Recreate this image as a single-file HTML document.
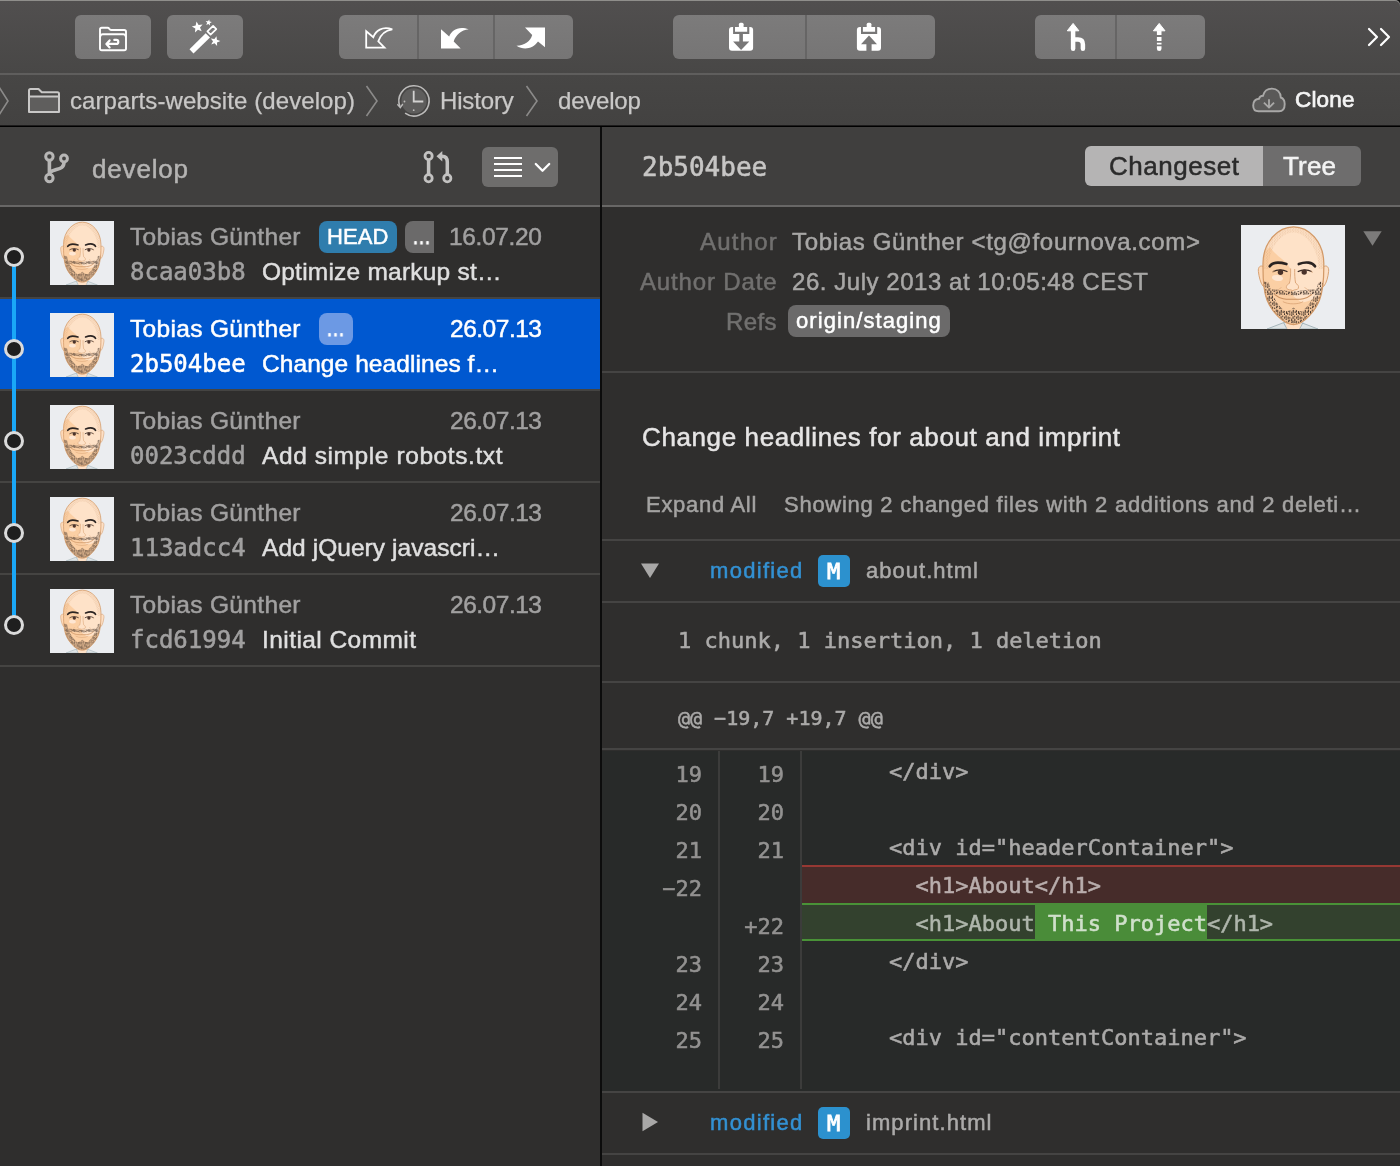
<!DOCTYPE html>
<html lang="en">
<head>
<meta charset="utf-8">
<title>Tower – carparts-website</title>
<style>
*{box-sizing:border-box;margin:0;padding:0}
html,body{width:1400px;height:1166px;overflow:hidden;background:#2f2e2d}
body{position:relative;font-family:"Liberation Sans",sans-serif;color:#ddd;-webkit-font-smoothing:antialiased}
.a{position:absolute}
.t{will-change:transform;position:absolute;white-space:nowrap;line-height:0;-webkit-text-stroke:0.5px currentColor;left:calc(var(--x)*1px);top:calc(var(--b)*1px - var(--fs)*0.3465px);font-size:calc(var(--fs)*1px);letter-spacing:calc(var(--ls,0)*1px)}
.m{font-family:"DejaVu Sans Mono","Liberation Mono",monospace;-webkit-text-stroke:0.55px currentColor}
.r{transform:translateX(-100%)}
svg{position:absolute;overflow:visible}
/* top chrome */
#toolbar{left:0;top:0;width:1400px;height:74px;background:linear-gradient(#514f4f,#484746);border-top-right-radius:5px;box-shadow:inset 0 1px 0 #8f8e8b}
#topline{left:0;top:0;width:1400px;height:1px;background:#8d8c8c}
#tbsep{left:0;top:73px;width:1400px;height:2px;background:#5f5e5d}
#crumbs{left:0;top:75px;width:1400px;height:50px;background:linear-gradient(#474645,#434241)}
#crumbline{left:0;top:125px;width:1400px;height:2px;background:linear-gradient(#1d1c1c 50%,#000 50%)}
.btn{position:absolute;top:15px;height:44px;background:linear-gradient(#7c7b7b,#767575);border-radius:6px}
.bsep{position:absolute;top:15px;width:2px;height:44px;background:#666565}
/* panes */
#lhead{left:0;top:127px;width:600px;height:78px;background:#403f3e}
#rhead{left:602px;top:127px;width:798px;height:78px;background:#403f3e}
.hsep{position:absolute;height:2px;background:#454443}
#vdiv{left:600px;top:127px;width:2px;height:1039px;background:#0c0c0c}
.row{position:absolute;left:0;width:600px;height:92px}
.row.sel{background:#0058d0}
.av{position:absolute;left:50px;width:64px;height:64px}
.dot{position:absolute;left:4px;width:20px;height:20px;border-radius:50%;background:#1f1f1f;border:3px solid #dbdbdb}
.badge{position:absolute;border-radius:8px}
#code{left:602px;top:751px;width:798px;height:340px;background:#282a29}
</style>
</head>
<body>
<svg width="0" height="0" style="position:absolute">
<defs>
<pattern id="stub" width="12" height="14" patternUnits="userSpaceOnUse">
<rect x="0.3" y="0.7" width="0.9" height="3.0" rx="0.3" fill="#46362c"/>
<rect x="0.4" y="4.2" width="0.9" height="2.2" rx="0.3" fill="#46362c"/>
<rect x="0.4" y="8.0" width="0.9" height="1.8" rx="0.3" fill="#46362c"/>
<rect x="0.2" y="10.6" width="0.9" height="1.8" rx="0.3" fill="#46362c"/>
<rect x="2.4" y="2.5" width="0.9" height="2.2" rx="0.3" fill="#2a211e"/>
<rect x="2.3" y="5.3" width="0.9" height="1.8" rx="0.3" fill="#33271f"/>
<rect x="2.3" y="9.5" width="0.9" height="3.0" rx="0.3" fill="#2a211e"/>
<rect x="2.0" y="13.3" width="0.9" height="2.2" rx="0.3" fill="#2a211e"/>
<rect x="3.8" y="0.8" width="0.9" height="3.0" rx="0.3" fill="#2a211e"/>
<rect x="3.7" y="4.2" width="0.9" height="1.8" rx="0.3" fill="#2a211e"/>
<rect x="3.6" y="7.3" width="0.9" height="2.6" rx="0.3" fill="#2a211e"/>
<rect x="3.5" y="11.4" width="0.9" height="3.0" rx="0.3" fill="#2a211e"/>
<rect x="5.7" y="2.2" width="0.9" height="1.8" rx="0.3" fill="#2a211e"/>
<rect x="5.3" y="6.4" width="0.9" height="1.8" rx="0.3" fill="#46362c"/>
<rect x="5.4" y="9.6" width="0.9" height="3.0" rx="0.3" fill="#2a211e"/>
<rect x="5.5" y="12.5" width="0.9" height="2.6" rx="0.3" fill="#2a211e"/>
<rect x="6.9" y="0.4" width="0.9" height="3.0" rx="0.3" fill="#2a211e"/>
<rect x="7.0" y="4.3" width="0.9" height="1.8" rx="0.3" fill="#2a211e"/>
<rect x="7.2" y="7.6" width="0.9" height="2.2" rx="0.3" fill="#46362c"/>
<rect x="7.2" y="11.7" width="0.9" height="2.2" rx="0.3" fill="#46362c"/>
<rect x="9.0" y="1.9" width="0.9" height="3.0" rx="0.3" fill="#33271f"/>
<rect x="8.6" y="6.3" width="0.9" height="2.6" rx="0.3" fill="#2a211e"/>
<rect x="8.7" y="9.2" width="0.9" height="1.8" rx="0.3" fill="#2a211e"/>
<rect x="9.3" y="12.5" width="0.9" height="2.6" rx="0.3" fill="#2a211e"/>
<rect x="10.8" y="0.4" width="0.9" height="2.6" rx="0.3" fill="#46362c"/>
<rect x="10.3" y="3.6" width="0.9" height="2.2" rx="0.3" fill="#2a211e"/>
<rect x="10.7" y="7.4" width="0.9" height="3.0" rx="0.3" fill="#33271f"/>
<rect x="11.0" y="11.1" width="0.9" height="2.2" rx="0.3" fill="#46362c"/>
</pattern>
<pattern id="stub2" width="2.6" height="2.8" patternUnits="userSpaceOnUse">
<rect x="0.3" y="0.2" width="0.8" height="1.2" rx="0.4" fill="#c58f62"/>
<rect x="1.6" y="1.5" width="0.7" height="1.1" rx="0.3" fill="#d09a6c"/>
</pattern>
<clipPath id="headclip"><path d="M52.5 1.8C68 1.8 82.5 17 82.8 38C83 52 82 66 78.5 75C75 84 64 99.5 52.5 99.5C41 99.5 29.5 84 26 75C22.5 66 21.8 52 22 38C22.3 17 37 1.8 52.5 1.8Z"/></clipPath>
<symbol id="face" viewBox="0 0 104 104">
<rect width="104" height="104" fill="#ebedf0"/>
<!-- shirt / neck -->
<path d="M26 104L43 97.5L60 97.5L77 104Z" fill="#dfe4e6" stroke="#9fb0b6" stroke-width="0.9"/>
<path d="M45.5 104L44 94H61L59.5 104Z" fill="#fde0c6"/>
<path d="M42.5 97.6L46 104M62 97.6L58.6 104" stroke="#9fb0b6" stroke-width="0.9" fill="none"/>
<!-- ears -->
<path d="M23 42C19.5 39.5 16.8 42 17.4 46.5C18 52 19.5 58 22 61C23 62 24.5 61 24.5 59Z" fill="#fdd9b8" stroke="#d9a273" stroke-width="1"/>
<path d="M82 42C85.500 39.5 88.2 42 87.600 46.5C87 52 85.500 58 83 61C82 62 80.500 61 80.500 59Z" fill="#fde0c6" stroke="#d9a273" stroke-width="1"/>
<!-- head -->
<path d="M52.5 1.8C68 1.8 82.5 17 82.8 38C83 52 82 66 78.5 75C75 84 64 99.500 52.5 99.500C41 99.500 29.500 84 26 75C22.5 66 21.800 52 22 38C22.300 17 37 1.800 52.5 1.800Z" fill="#fee2c8"/>
<g clip-path="url(#headclip)">
<!-- shaded left side -->
<path d="M20 30L29 22C34 30 40 32 47 40L49.500 44L48.500 58L45 61C45 64 48 65.5 51.700 65.600L52 71L60 77C66 78 72 74 79 70L79 76L60 100H30L18 70Z" fill="#fbcfa4"/>
<!-- head stubble -->
<path d="M52.5 1.8C68 1.8 82.5 17 82.8 38L82.800 44L77.500 44C78 26 66 7.500 52.5 7.500C39 7.500 27 26 27.500 44L22 44L22 38C22.300 17 37 1.800 52.5 1.800Z" fill="url(#stub2)" opacity="0.75"/>
<!-- beard -->
<path id="beardunder" d="M20 56L27.500 57L29.500 64L32.500 72L37.500 80L44 86.500L49 85.500L52.500 82.500L56 85.500L61 86.500L67.500 80L72.500 72L75.500 64L77.500 57L85 56L84 75L66 102H38L21 75Z M29.500 64.500C37 64 44 65.500 52.300 66.800C60 65.500 67 64 75.500 64.500L74 69.600C67 68.600 60 70.200 52.300 70.800C45 70.200 38 68.600 31 69.600Z" fill="#b0825a" fill-opacity="0.14"/>
<path d="M20 56L27.500 57L29.500 64L32.500 72L37.500 80L44 86.500L49 85.500L52.500 82.500L56 85.500L61 86.500L67.500 80L72.500 72L75.500 64L77.500 57L85 56L84 75L66 102H38L21 75Z M29.500 64.500C37 64 44 65.500 52.300 66.800C60 65.500 67 64 75.500 64.500L74 69.600C67 68.600 60 70.200 52.300 70.800C45 70.200 38 68.600 31 69.600Z" fill="url(#stub)"/>
</g>
<!-- head outline -->
<path d="M52.5 1.8C68 1.8 82.5 17 82.8 38C83 52 82 66 78.5 75C75 84 64 99.500 52.5 99.500C41 99.500 29.500 84 26 75C22.5 66 21.800 52 22 38C22.300 17 37 1.800 52.5 1.800Z" fill="none" stroke="#d39a68" stroke-width="1.25"/>
<!-- cheek highlight -->
<ellipse cx="36.500" cy="53" rx="5.600" ry="3" fill="#fee6d2" transform="rotate(8 36.500 53)"/>
<!-- brows -->
<path d="M28.800 41.300C31 37.800 37 36.600 45.400 39" fill="none" stroke="#2b2422" stroke-width="2.7" stroke-linecap="round"/>
<path d="M57.800 39C65 36.400 71.500 37.300 74 41.300" fill="none" stroke="#2b2422" stroke-width="2.7" stroke-linecap="round"/>
<!-- eyes -->
<path d="M32.300 46.500C36 44.300 42 44.200 46 46.500" fill="none" stroke="#3a2b26" stroke-width="1.300" stroke-linecap="round"/>
<path d="M57.200 46.500C61 44.200 67 44.300 70.500 46.500" fill="none" stroke="#3a2b26" stroke-width="1.300" stroke-linecap="round"/>
<circle cx="39.500" cy="47.300" r="2.700" fill="#4a332b"/>
<circle cx="63.200" cy="47.100" r="2.700" fill="#4a332b"/>
<path d="M31 47.500L33.500 46M71.800 47.500L69.500 46" stroke="#d9a273" stroke-width="0.700"/>
<!-- nose -->
<path d="M49.600 43.500C49.800 50 49.300 55 48.300 58.500C46 59.500 44.600 61.500 45.800 63.500C47 65.300 49.500 64.300 51.700 65.600C54 64.300 56.500 65.300 57.300 63.300C58.300 61 56.500 59.500 54.600 58C53.800 54 53.600 49 53.700 44" fill="#fee2c8" stroke="#d9a273" stroke-width="0.900" stroke-linejoin="round"/>
<!-- smile lines -->
<path d="M40.500 62.500C37.500 64 35.500 66 34.500 68M63.500 62.500C66.500 64 68.500 66 69.500 68" fill="none" stroke="#e0ae82" stroke-width="0.700"/>
<!-- mouth -->
<path d="M33.800 69.600C40 74.800 46 74.200 52.300 74.200C58.500 74.200 64.500 74.800 70.500 69.600" fill="none" stroke="#c98f5e" stroke-width="1.100" stroke-linecap="round"/>
<path d="M42.200 76.800C47 79.600 57.500 79.600 61.800 76.800" fill="none" stroke="#d9a273" stroke-width="0.800" stroke-linecap="round"/>
</symbol>
</defs>
</svg>
<!-- ======= toolbar ======= -->
<div class="a" style="right:0;top:0;width:8px;height:8px;background:#0a0a0a"></div>
<div class="a" id="toolbar"></div>
<div class="a" id="tbsep"></div>
<div class="a" id="crumbs"></div>
<div class="a" id="crumbline"></div>

<!-- toolbar buttons -->
<div class="btn" style="left:75px;width:76px"></div>
<div class="btn" style="left:167px;width:76px"></div>
<div class="btn" style="left:339px;width:234px"></div>
<div class="bsep" style="left:417px"></div><div class="bsep" style="left:493px"></div>
<div class="btn" style="left:673px;width:262px"></div>
<div class="bsep" style="left:805px"></div>
<div class="btn" style="left:1035px;width:170px"></div>
<div class="bsep" style="left:1115px"></div>
<svg class="a" id="tbicons" style="left:0;top:0" width="1400" height="127" viewBox="0 0 1400 127">
<!-- open folder w/ return arrow -->
<g fill="none" stroke="#fff" stroke-width="1.900" stroke-linejoin="round" stroke-linecap="round">
<path d="M101.800 50.200Q100 50.200 100 48.400V29.600Q100 27.800 101.800 27.800H107.600Q108.600 27.800 109.200 28.600L109.800 29.300Q110.400 30 111.400 30H124.200Q126 30 126 31.800V48.400Q126 50.200 124.200 50.200Z"/>
<path d="M100.300 36.500Q100.600 34.200 102.800 34.200H123.200Q125.400 34.200 125.700 36.500"/>
<path d="M114.300 39.900H116.300Q118.300 39.900 118.300 41.900Q118.300 43.900 116.300 43.900H107.500M109.600 40.400L106.400 43.900L109.600 47.400" stroke-width="2.200"/>
</g>
<!-- magic wand -->
<g fill="#fff">
<path d="M189.500 49.200L205.700 33.300L210 37.600L193.500 53.400Z"/>
<path d="M207.400 31.400L213.100 25.900L216.300 29.200L210.600 34.700Z" fill="none" stroke="#fff" stroke-width="1.700" stroke-linejoin="round"/>
<path d="M196.5 21.5L198.6 25.0L202.6 24.5L200.0 27.5L201.7 31.2L197.9 29.7L195.0 32.4L195.3 28.4L191.8 26.4L195.7 25.5Z"/>
<path d="M209.2 19.4L209.6 21.6L211.9 22.1L209.8 23.3L210.0 25.6L208.4 24.0L206.2 24.9L207.2 22.8L205.7 21.1L208.0 21.3Z"/>
<path d="M216.5 36.2L216.9 39.8L220.4 40.9L217.0 42.4L217.1 46.1L214.6 43.3L211.2 44.5L213.0 41.3L210.8 38.4L214.4 39.1Z"/>
</g>
<!-- fetch (outlined arrow) -->
<path d="M366.200 47.700V31.300L373.300 37.300C375.500 31 382 25.800 392.300 29.300C385.500 30.300 380.300 35 378.300 41.300L384.500 47.700Z" fill="none" stroke="#fff" stroke-width="1.800" stroke-linejoin="miter"/>
<!-- pull (filled) -->
<path d="M441 48.600V29.300L449.200 36.400C451.500 30.500 458.500 25.300 468.700 29.300C461.200 30 455.700 35 453.700 41.500L460.700 48.600Z" fill="#fff"/>
<!-- push (filled up-right) -->
<path d="M545 27.600H525L532.200 35C530.500 41 525 45.300 516.500 45.800C524 50.500 533 48.700 538 41.500L545 47.300Z" fill="#fff"/>
<!-- stash save -->
<rect x="729" y="27.100" width="24.100" height="23.700" rx="3" fill="#fff"/>
<rect x="738.900" y="22.800" width="4.700" height="6" rx="1.500" fill="#fff"/>
<path d="M733.100 27.100H735V31.700H747.200V27.100H749.300V33.900H742.900V41.400H749.300L741.100 50L733.100 41.400H739.300V33.900H733.100Z" fill="#787777"/>
<!-- stash apply -->
<rect x="856.900" y="27.100" width="24.100" height="23.700" rx="3" fill="#fff"/>
<rect x="866.700" y="22.800" width="4.700" height="6" rx="1.500" fill="#fff"/>
<path d="M861 27.100H862.900V31.700H875.100V27.100H877.200V33.900H861Z" fill="#787777"/>
<path d="M869 35.500L877 44.300H871.600V51H866.400V44.300H861Z" fill="#787777"/>
<!-- merge -->
<g fill="none" stroke="#fff" stroke-width="4.500" stroke-linecap="round">
<path d="M1073.100 30V48.800"/>
<path d="M1073.100 39.500H1078Q1082.900 39.500 1082.900 44.500V48.800"/>
</g>
<path d="M1067.300 30.800L1073.100 23.400L1078.900 30.800Z" fill="#fff" stroke="#fff" stroke-width="1" stroke-linejoin="round"/>
<!-- rebase (dashed arrow) -->
<path d="M1153.400 30.800L1159.200 23.400L1165 30.800Z" fill="#fff" stroke="#fff" stroke-width="1" stroke-linejoin="round"/>
<path d="M1156.900 30.800H1161.500V35H1156.900ZM1156.900 37H1161.500V41H1156.900ZM1156.900 42.700H1161.500V44.500H1156.900ZM1156.900 46.200H1161.500V48.800Q1161.500 51.100 1159.200 51.100Q1156.900 51.100 1156.900 48.800Z" fill="#fff"/>
<!-- overflow chevrons -->
<path d="M1369 29L1377 37L1369 45M1381 29L1389 37L1381 45" fill="none" stroke="#fff" stroke-width="2.200" stroke-linecap="round" stroke-linejoin="round"/>
<!-- breadcrumb chevrons -->
<g fill="none" stroke="#8b8a89" stroke-width="1.600">
<path d="M-1 87L8 101L-1 115"/>
<path d="M366.500 86L377 101L366.500 116"/>
<path d="M526.500 86L537 101L526.500 116"/>
</g>
<!-- folder -->
<path d="M29 96.500H59V112H29Z" fill="#5f5e5d"/>
<path d="M29 112V90.500Q29 89 30.500 89H38.500L41.800 92.300H57.500Q59 92.300 59 93.800V112Z M29 96.500H59" fill="none" stroke="#c9c8c7" stroke-width="2" stroke-linejoin="round"/>
<!-- clock -->
<circle cx="414" cy="100.9" r="12.700" fill="#5e5d5c"/>
<path d="M405.1 113.1A15.1 15.1 0 1 0 400.0 106.6" fill="none" stroke="#bcbbba" stroke-width="1.600"/>
<path d="M397.4 104.2L400.3 107.6L402.8 104.0" fill="none" stroke="#bcbbba" stroke-width="1.400"/>
<path d="M413.700 90.800V101.500H423.300" fill="none" stroke="#d2d1d0" stroke-width="1.800"/>
<circle cx="404.500" cy="101.500" r="0.900" fill="#bcbbba"/><circle cx="413.700" cy="110.200" r="0.900" fill="#bcbbba"/>
<!-- cloud -->
<path d="M1258.500 111.300C1255 111.300 1253.200 109 1253.200 105.500C1253.200 101.500 1255.500 99.200 1259 98.800C1259.500 97 1261 95.800 1263 95.800C1264 91.500 1267.500 88.600 1272 88.600C1277 88.600 1280.800 92.500 1280.800 97.500C1283.500 98.500 1284.700 101 1284.700 104C1284.700 108.500 1282.500 111.300 1279 111.300Z" fill="#5a5958" stroke="#a9a8a7" stroke-width="1.900"/>
<path d="M1269 99.300V107M1263.900 102.600L1269 107.600L1274.100 102.600" fill="none" stroke="#a9a8a7" stroke-width="1.800"/>
</svg>
<span class="t" style="--ls:0.088;--x:70;--b:109;--fs:24;--w:283;color:#c9c8c7;-webkit-text-stroke:0.25px #c9c8c7">carparts-website (develop)</span>
<span class="t" style="--ls:-0.154;--x:440;--b:109;--fs:24;--w:71.75;color:#c9c8c7;-webkit-text-stroke:0.25px #c9c8c7">History</span>
<span class="t" style="--ls:-0.221;--x:558;--b:109;--fs:24;--w:80.75;color:#c9c8c7;-webkit-text-stroke:0.25px #c9c8c7">develop</span>
<span class="t" style="--ls:0.176;--x:1294.5;--b:108;--fs:22.5;--w:57.5;color:#f4f4f4;-webkit-text-stroke:0.7px #f4f4f4">Clone</span>
<!-- ======= panes ======= -->
<div class="a" id="lhead"></div>
<div class="a" id="rhead"></div>
<div class="hsep" style="left:0;top:205px;width:600px;background:#686766"></div>
<div class="hsep" style="left:602px;top:205px;width:798px;background:#686766"></div>
<div class="a" id="vdiv"></div>

<!-- left header -->
<svg class="a" style="left:0;top:127px" width="600" height="78" viewBox="0 127 600 78">
<g fill="none" stroke="#b7b6b5" stroke-width="3">
<circle cx="49.400" cy="156.500" r="3.700"/><circle cx="64" cy="158.500" r="3.400"/><circle cx="49.400" cy="178" r="3.700"/>
<path d="M49.400 160.200V174.300M64 162C64 168 60 168.500 55 170C51.500 171 49.600 172 49.400 174.300" stroke-width="3.600"/>
</g>
<g fill="none" stroke="#c3c2c1" stroke-width="2.800">
<circle cx="428.600" cy="156" r="3.600"/><circle cx="428.600" cy="178.300" r="3.600"/><circle cx="447.300" cy="178.300" r="3.600"/>
<path d="M428.600 159.600V174.700M447.300 174.700V162Q447.300 156.300 442 156.300H440" stroke-width="3.500"/>
</g>
<path d="M436.500 156.300L442.300 151V161.600Z" fill="#c3c2c1"/>
<rect x="482" y="147" width="76" height="40" rx="6" fill="#6e6d6c"/>
<path d="M494 158H522M494 164H522M494 170H522M494 176H522" stroke="#fff" stroke-width="2"/>
<path d="M535.800 164L542.500 170.700L549.200 164" fill="none" stroke="#fff" stroke-width="2.300" stroke-linecap="round" stroke-linejoin="round"/>
</svg>
<span class="t" style="--ls:0.820;--x:92;--b:178;--fs:26;--w:94;color:#b5b4b3">develop</span>
<!-- right header -->
<span class="t m" style="--x:642;--b:176.400;--fs:26;color:#c7c6c5">2b504bee</span>
<div class="a" style="left:1085px;top:146px;width:178px;height:40px;background:#b5b4b4;border-radius:6px 0 0 6px"></div>
<div class="a" style="left:1263px;top:146px;width:98px;height:40px;background:#6e6d6d;border-radius:0 6px 6px 0"></div>
<span class="t" style="--ls:0.529;--x:1109;--b:175.400;--fs:26;--w:128;color:#2b2b2b">Changeset</span>
<span class="t" style="--ls:0.167;--x:1283;--b:175.400;--fs:26;--w:51;color:#f3f3f3">Tree</span>
<!-- commit info -->
<span class="t" style="--ls:1.216;--x:700;--b:250;--fs:24;--w:74.800;color:#71706f">Author</span>
<span class="t" style="--ls:0.842;--x:640;--b:290;--fs:24;--w:134.500;color:#71706f">Author Date</span>
<span class="t" style="--ls:0.380;--x:726;--b:330;--fs:24;--w:48.500;color:#71706f">Refs</span>
<span class="t" style="--ls:0.669;--x:792;--b:250.600;--fs:24;--w:406;color:#a8a7a6">Tobias Günther &lt;tg@fournova.com&gt;</span>
<span class="t" style="--ls:0.544;--x:792;--b:290.600;--fs:24;--w:354;color:#a8a7a6">26. July 2013 at 10:05:48 CEST</span>
<div class="badge" style="left:788px;top:305px;width:162px;height:32px;background:#6b6a6a"></div>
<span class="t" style="--ls:1.071;--x:796;--b:328.600;--fs:22;--w:142.800;color:#fff">origin/staging</span>
<svg class="a" style="left:1362.500px;top:231px" width="19" height="15" viewBox="0 0 19 15"><path d="M0.300 0.300H18.700L9.500 14.800Z" fill="#7c7b7a"/></svg>
<div class="hsep" style="left:602px;top:371px;width:798px"></div>
<span class="t" style="--ls:0.613;--x:642;--b:446.300;--fs:26;--w:476;color:#e6e5e5">Change headlines for about and imprint</span>
<span class="t" style="--ls:0.703;--x:646;--b:513;--fs:22;--w:108.300;color:#a4a3a2">Expand All</span>
<span class="t" style="--ls:0.733;--x:784;--b:513;--fs:22;--w:575;color:#a4a3a2">Showing 2 changed files with 2 additions and 2 deleti…</span>
<div class="hsep" style="left:602px;top:539px;width:798px"></div>
<!-- file 1 -->
<svg class="a" style="left:640px;top:563px" width="20" height="16" viewBox="0 0 20 16"><path d="M1 0.500H19L10 15Z" fill="#a9a8a7"/></svg>
<span class="t" style="--ls:1.306;--x:710;--b:578.600;--fs:22;--w:90.300;color:#3391d3">modified</span>
<div class="a" style="left:818px;top:555px;width:32px;height:32px;background:#2c91ce;border-radius:5px"></div>
<span class="t m" style="--x:827;--b:579.500;--fs:22;color:#fff;-webkit-text-stroke:0.9px #fff">M</span>
<span class="t" style="--ls:1.030;--x:866;--b:578.600;--fs:22;--w:110;color:#abaaa9">about.html</span>
<div class="hsep" style="left:602px;top:601px;width:798px"></div>
<span class="t m" style="--x:678;--b:648.800;--fs:22;color:#abaaa9">1 chunk, 1 insertion, 1 deletion</span>
<div class="hsep" style="left:602px;top:681px;width:798px"></div>
<span class="t m" style="--x:678;--b:725.200;--fs:20;color:#abaaa9">@@ −19,7 +19,7 @@</span>
<div class="hsep" style="left:602px;top:748px;width:798px"></div>
<!-- diff -->
<div class="a" id="code"></div>
<div class="a" style="left:718px;top:751px;width:2px;height:338px;background:#3c3c3b"></div>
<div class="a" style="left:800px;top:751px;width:2px;height:338px;background:#3c3c3b"></div>
<div class="a" style="left:802px;top:865px;width:598px;height:38px;background:#462c2a;border-top:2px solid #963833"></div>
<div class="a" style="left:802px;top:903px;width:598px;height:38px;background:#33412e;border-top:2px solid #499237;border-bottom:2px solid #499237"></div>
<div class="a" style="left:1035px;top:903px;width:172px;height:38px;background:#4a8c39"></div>

<span class="t m r" style="--x:702;--b:783.0;--fs:22;color:#939291">19</span>
<span class="t m r" style="--x:784;--b:783.0;--fs:22;color:#939291">19</span>
<span class="t m" style="--x:889;--b:779.3;--fs:22;color:#abaaa9;white-space:pre">&lt;/div&gt;</span>
<span class="t m r" style="--x:702;--b:821.0;--fs:22;color:#939291">20</span>
<span class="t m r" style="--x:784;--b:821.0;--fs:22;color:#939291">20</span>
<span class="t m r" style="--x:702;--b:859.0;--fs:22;color:#939291">21</span>
<span class="t m r" style="--x:784;--b:859.0;--fs:22;color:#939291">21</span>
<span class="t m" style="--x:889;--b:855.3;--fs:22;color:#abaaa9;white-space:pre">&lt;div id="headerContainer"&gt;</span>
<span class="t m r" style="--x:702;--b:897.0;--fs:22;color:#939291">−22</span>
<span class="t m" style="--x:889;--b:893.3;--fs:22;color:#b9aead;white-space:pre">  &lt;h1&gt;About&lt;/h1&gt;</span>
<span class="t m r" style="--x:784;--b:935.0;--fs:22;color:#939291">+22</span>
<span class="t m" style="--x:889;--b:931.3;--fs:22;color:#afb6ac;white-space:pre">  &lt;h1&gt;About<b style="font-weight:normal;color:#d0e0cb"> This Project</b>&lt;/h1&gt;</span>
<span class="t m r" style="--x:702;--b:973.0;--fs:22;color:#939291">23</span>
<span class="t m r" style="--x:784;--b:973.0;--fs:22;color:#939291">23</span>
<span class="t m" style="--x:889;--b:969.3;--fs:22;color:#abaaa9;white-space:pre">&lt;/div&gt;</span>
<span class="t m r" style="--x:702;--b:1011.0;--fs:22;color:#939291">24</span>
<span class="t m r" style="--x:784;--b:1011.0;--fs:22;color:#939291">24</span>
<span class="t m r" style="--x:702;--b:1049.0;--fs:22;color:#939291">25</span>
<span class="t m r" style="--x:784;--b:1049.0;--fs:22;color:#939291">25</span>
<span class="t m" style="--x:889;--b:1045.3;--fs:22;color:#abaaa9;white-space:pre">&lt;div id="contentContainer"&gt;</span>
<div class="hsep" style="left:602px;top:1091px;width:798px"></div>
<!-- file 2 -->
<svg class="a" style="left:642px;top:1112px" width="17" height="20" viewBox="0 0 17 20"><path d="M0.500 0.800L16 10L0.500 19.200Z" fill="#a9a8a7"/></svg>
<span class="t" style="--ls:1.306;--x:710;--b:1130.600;--fs:22;--w:90.300;color:#3391d3">modified</span>
<div class="a" style="left:818px;top:1107px;width:32px;height:32px;background:#2c91ce;border-radius:5px"></div>
<span class="t m" style="--x:827;--b:1131.500;--fs:22;color:#fff;-webkit-text-stroke:0.9px #fff">M</span>
<span class="t" style="--ls:1.074;--x:866;--b:1130.600;--fs:22;--w:123.500;color:#abaaa9">imprint.html</span>
<div class="hsep" style="left:602px;top:1153px;width:798px"></div>
<!-- ======= commit list ======= -->
<div class="a" style="left:12px;top:257px;width:4px;height:368px;background:#1aa7f7"></div>
<div class="row" style="top:207px;"></div>
<div class="hsep" style="left:0;top:297px;width:600px;background:#454442"></div>
<svg class="av" style="top:221px" viewBox="0 0 104 104"><use href="#face"/></svg>
<span class="t" style="--ls:0.334;--x:130;--b:245;--fs:24.5;--w:168.5;color:#a1a0a0">Tobias Günther</span>
<span class="t" style="--ls:-0.339;--x:449;--b:245;--fs:24.5;--w:91;color:#a1a0a0">16.07.20</span>
<span class="t m" style="--x:130;--b:280.7;--fs:24;color:#a1a0a0">8caa03b8</span>
<span class="t" style="--ls:0.220;--x:262;--b:280;--fs:24.5;--w:237.5;color:#dfdfdf">Optimize markup st…</span>
<div class="row sel" style="top:299px;z-index:0;"></div>
<div class="hsep" style="left:0;top:389px;width:600px;background:#454442"></div>
<svg class="av" style="top:313px" viewBox="0 0 104 104"><use href="#face"/></svg>
<span class="t" style="--ls:0.334;--x:130;--b:337;--fs:24.5;--w:168.5;color:#fff">Tobias Günther</span>
<span class="t" style="--ls:-0.482;--x:450;--b:337;--fs:24.5;--w:90;color:#fff">26.07.13</span>
<span class="t m" style="--x:130;--b:372.7;--fs:24;color:#fff">2b504bee</span>
<span class="t" style="--ls:0.076;--x:262;--b:372;--fs:24.5;--w:235;color:#fff">Change headlines f…</span>
<div class="row" style="top:391px;"></div>
<div class="hsep" style="left:0;top:481px;width:600px;background:#454442"></div>
<svg class="av" style="top:405px" viewBox="0 0 104 104"><use href="#face"/></svg>
<span class="t" style="--ls:0.334;--x:130;--b:429;--fs:24.5;--w:168.5;color:#a1a0a0">Tobias Günther</span>
<span class="t" style="--ls:-0.482;--x:450;--b:429;--fs:24.5;--w:90;color:#a1a0a0">26.07.13</span>
<span class="t m" style="--x:130;--b:464.7;--fs:24;color:#a1a0a0">0023cddd</span>
<span class="t" style="--ls:0.586;--x:262;--b:464;--fs:24.5;--w:238.5;color:#dfdfdf">Add simple robots.txt</span>
<div class="row" style="top:483px;"></div>
<div class="hsep" style="left:0;top:573px;width:600px;background:#454442"></div>
<svg class="av" style="top:497px" viewBox="0 0 104 104"><use href="#face"/></svg>
<span class="t" style="--ls:0.334;--x:130;--b:521;--fs:24.5;--w:168.5;color:#a1a0a0">Tobias Günther</span>
<span class="t" style="--ls:-0.482;--x:450;--b:521;--fs:24.5;--w:90;color:#a1a0a0">26.07.13</span>
<span class="t m" style="--x:130;--b:556.7;--fs:24;color:#a1a0a0">113adcc4</span>
<span class="t" style="--ls:0.057;--x:262;--b:556;--fs:24.5;--w:236;color:#dfdfdf">Add jQuery javascri…</span>
<div class="row" style="top:575px;"></div>
<div class="hsep" style="left:0;top:665px;width:600px;background:#454442"></div>
<svg class="av" style="top:589px" viewBox="0 0 104 104"><use href="#face"/></svg>
<span class="t" style="--ls:0.334;--x:130;--b:613;--fs:24.5;--w:168.5;color:#a1a0a0">Tobias Günther</span>
<span class="t" style="--ls:-0.482;--x:450;--b:613;--fs:24.5;--w:90;color:#a1a0a0">26.07.13</span>
<span class="t m" style="--x:130;--b:648.7;--fs:24;color:#a1a0a0">fcd61994</span>
<span class="t" style="--ls:0.431;--x:262;--b:648;--fs:24.5;--w:152;color:#dfdfdf">Initial Commit</span>
<div class="badge" style="left:319px;top:221px;width:78px;height:32px;background:#2f7dad"></div>
<span class="t" style="--ls:0.125;--x:327;--b:245;--fs:22;--w:59.500;color:#fff">HEAD</span>
<div class="badge" style="left:405px;top:221px;width:29px;height:32px;background:#6b6a6a;border-radius:8px 0 0 8px"></div>
<span class="t" style="--x:412;--b:245;--fs:22;color:#fff;transform:scaleX(.86);transform-origin:0 0;-webkit-text-stroke:0.9px #fff">…</span>
<div class="badge" style="left:319px;top:313px;width:34px;height:32px;background:#6c99e4"></div>
<span class="t" style="--x:326;--b:337;--fs:22;color:#fff;transform:scaleX(.86);transform-origin:0 0;-webkit-text-stroke:0.9px #fff">…</span>
<div class="a" style="left:12px;top:257px;width:4px;height:368px;background:#1aa7f7"></div>
<div class="dot" style="top:247px"></div>
<div class="dot" style="top:339px"></div>
<div class="dot" style="top:431px"></div>
<div class="dot" style="top:523px"></div>
<div class="dot" style="top:615px"></div>
<svg class="a" style="left:1241px;top:225px;width:104px;height:104px" viewBox="0 0 104 104"><use href="#face"/></svg>
</body>
</html>
